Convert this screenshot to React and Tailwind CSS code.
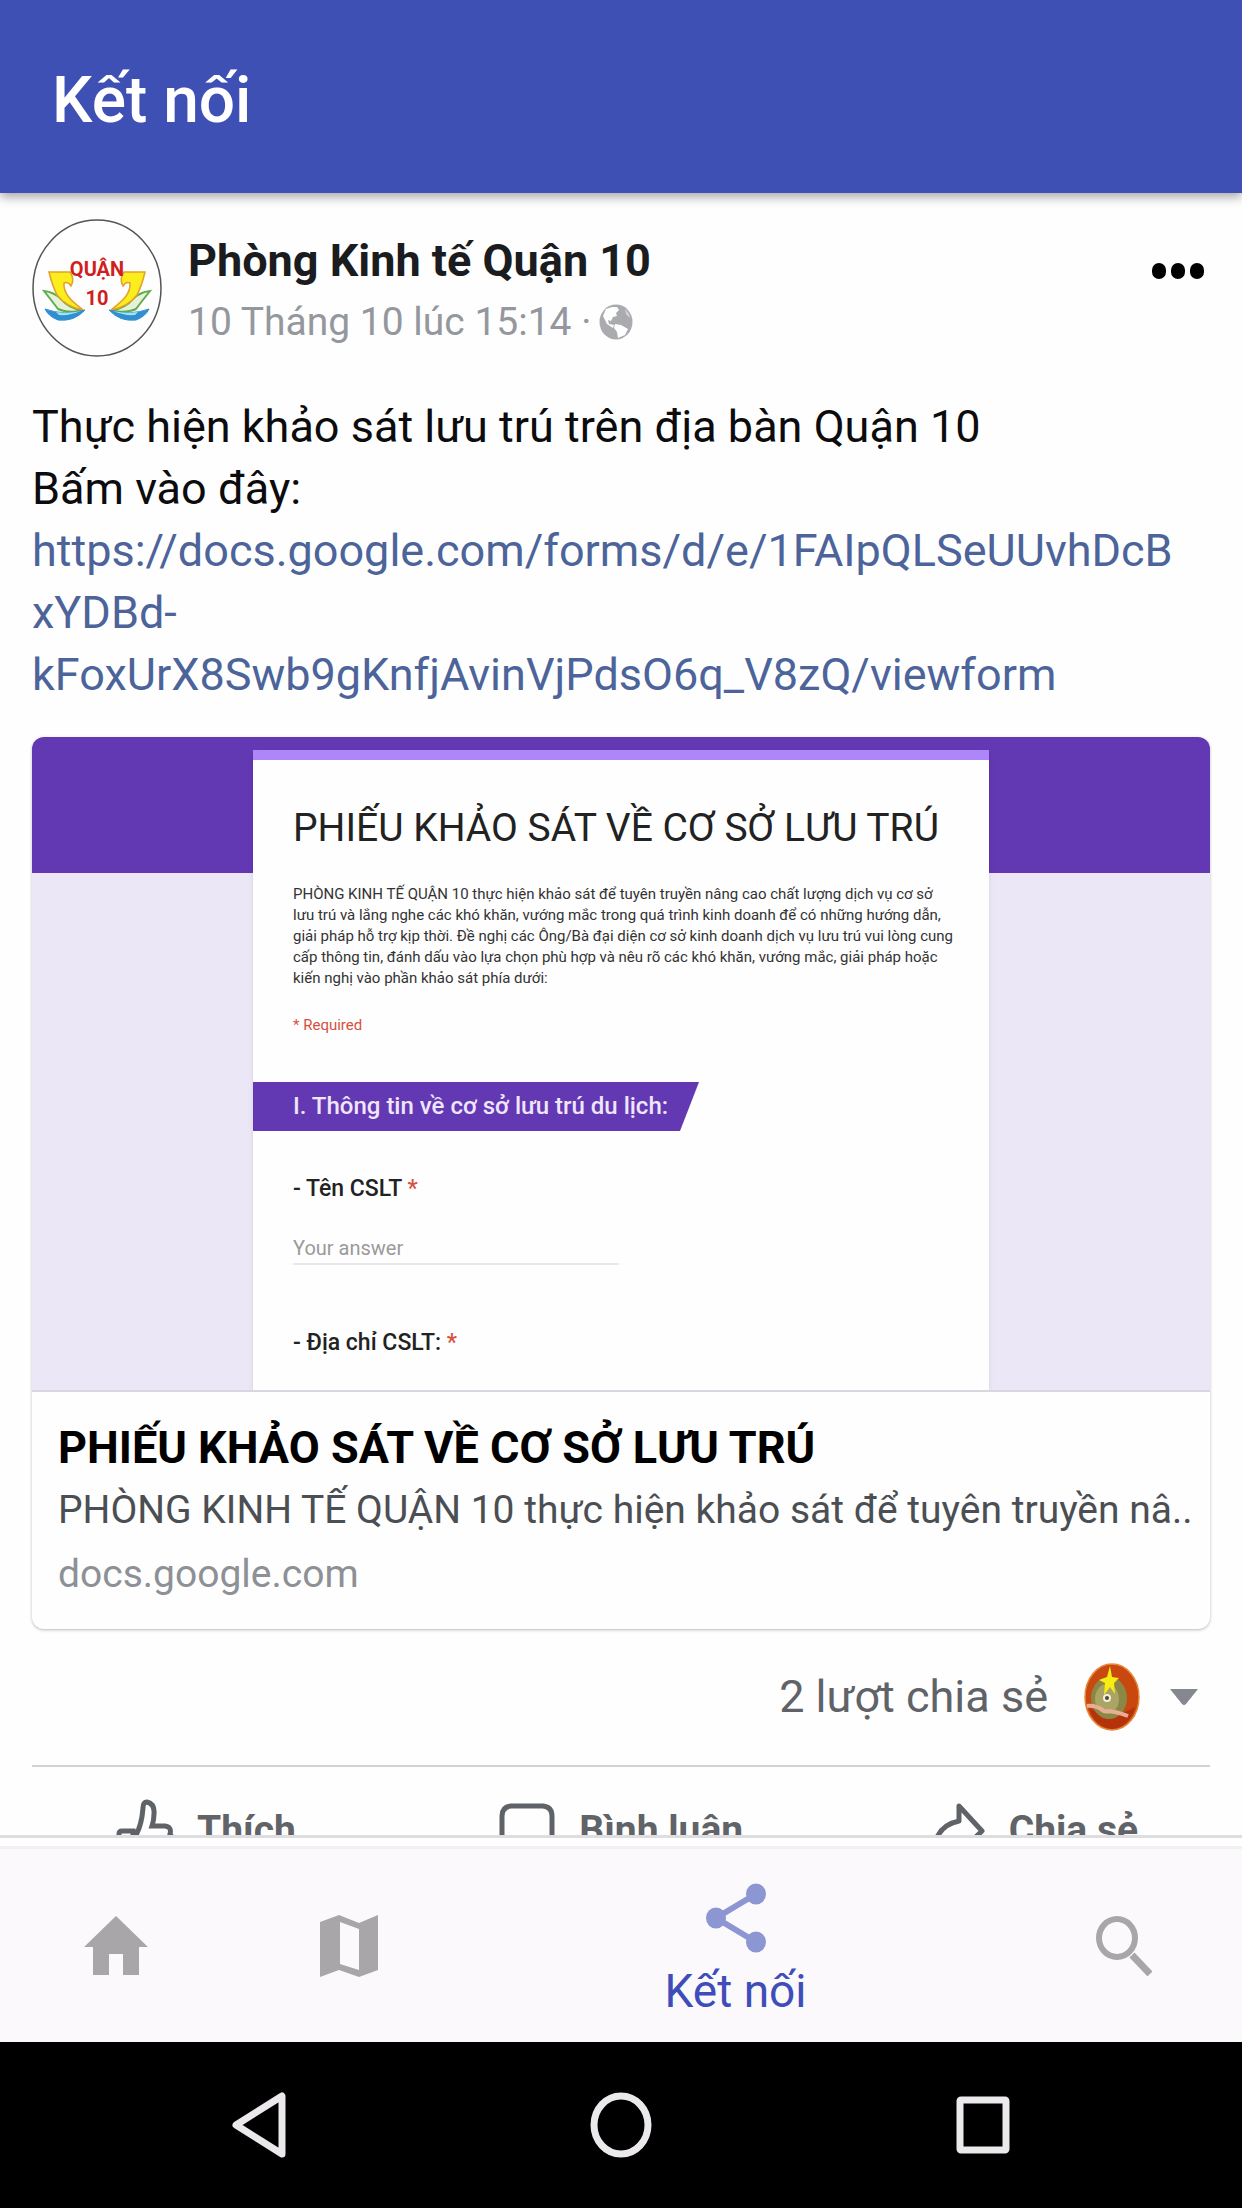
const LINK =
  "https://docs.google.com/forms/d/e/1FAIpQLSeUUvhDcBxYDBd-kFoxUrX8Swb9gKnfjAvinVjPdsO6q_V8zQ/viewform";

function PageLogo() {
  return (
    <svg viewBox="0 0 130 138" className="h-[138px] w-[130px] shrink-0" role="img" aria-label="Quận 10">
      <ellipse cx="65" cy="69" rx="64" ry="68" fill="#fefefe" stroke="#555" strokeWidth="1.5" />
      <g id="petals">
        <path d="M12 72 Q22 73 29 80 Q36 89 51 92 Q34 94 26 90 Q20 82 12 72 Z" fill="#e6f2d8" stroke="#5fae4e" strokeWidth="2" />
        <path d="M17 53 L38 53 Q43 60 39 67 Q36 62 32 64 C31 76 42 84 51 91 Q34 88 25 76 Q20 66 17 53 Z" fill="#fbee1c" stroke="#e3a02a" strokeWidth="1.5" />
        <path d="M13 90 Q32 97 53 91 Q42 103 26 101 Q16 97 13 90 Z" fill="#2f8fd0" stroke="#2f8fd0" strokeWidth="1" />
        <path d="M24 93 Q36 95 49 92 Q37 97 27 96 Z" fill="#a5e3ea" />
      </g>
      <use href="#petals" transform="translate(130 0) scale(-1 1)" />
      <text x="65" y="57" textAnchor="middle" fontSize="20" fontWeight="700" fill="#cf1f1f" className="font-['Roboto',sans-serif]">
        QUẬN
      </text>
      <text x="65" y="86" textAnchor="middle" fontSize="20" fontWeight="700" fill="#cf1f1f" className="font-['Roboto',sans-serif]">
        10
      </text>
    </svg>
  );
}

function Globe() {
  return (
    <svg viewBox="0 0 34 36" className="h-9 w-[34px]" aria-hidden="true">
      <ellipse cx="17" cy="18" rx="16.5" ry="17.5" fill="#a9abae" />
      <path d="M7 5 L13 3 L18 3 L20 6 L17 9 L18 12 L14 13 L12 17 L9 16 L10 20 L15 21 L14 24 L8 20 L4 12 Z" fill="#fff" />
      <path d="M16 20 L22 21 L29 25 L26 31 L19 34 L18 28 L15 24 Z" fill="#fff" />
      <path d="M26 5 L30 10 L31 14 L27 10 Z" fill="#d5d6d8" />
    </svg>
  );
}

function ShareEmblem() {
  return (
    <svg viewBox="0 0 56 68" className="h-[68px] w-14" role="img" aria-label="Huy hiệu">
      <ellipse cx="28" cy="34" rx="27" ry="33" fill="#c8480f" stroke="#e58a3a" strokeWidth="1.5" />
      <path d="M5 45 Q10 64 28 66 Q46 64 51 44 Q30 58 5 45 Z" fill="#b5330a" />
      <ellipse cx="25" cy="35" rx="18" ry="21" fill="#8b8845" />
      <ellipse cx="23" cy="36" rx="12" ry="15" fill="#aaa565" />
      <path d="M26 3 L28 14 L35 15 L30 20 L31 31 L26 24 L20 32 L21 20 L15 17 L23 14 Z" fill="#f9ec12" />
      <circle cx="23" cy="35" r="4" fill="#f3efe0" />
      <circle cx="23" cy="35" r="2" fill="#4c4a3a" />
      <path d="M3 43 Q12 42 20 48 Q32 48 44 53" fill="none" stroke="#e8ae95" strokeWidth="4" />
    </svg>
  );
}

function FormPreview() {
  return (
    <div className="flex h-[655px] justify-center overflow-hidden border-b-2 border-[#d9d6e0] bg-[linear-gradient(#6338b3_136px,#ebe7f6_136px)] pt-[13px]">
      <div className="w-[736px] border-t-[10px] border-[#ad86fa] bg-[#fefefe] text-[#222] shadow-md">
        <h2 className="pt-11 pl-10 text-[39px] leading-[48px] whitespace-nowrap">PHIẾU KHẢO SÁT VỀ CƠ SỞ LƯU TRÚ</h2>
        <p className="mt-8 pl-10 text-[15px] leading-[21px] whitespace-nowrap text-[#333]">
          PHÒNG KINH TẾ QUẬN 10 thực hiện khảo sát để tuyên truyền nâng cao chất lượng dịch vụ cơ sở
          <br />
          lưu trú và lắng nghe các khó khăn, vướng mắc trong quá trình kinh doanh để có những hướng dẫn,
          <br />
          giải pháp hỗ trợ kịp thời. Đề nghị các Ông/Bà đại diện cơ sở kinh doanh dịch vụ lưu trú vui lòng cung
          <br />
          cấp thông tin, đánh dấu vào lựa chọn phù hợp và nêu rõ các khó khăn, vướng mắc, giải pháp hoặc
          <br />
          kiến nghị vào phần khảo sát phía dưới:
        </p>
        <p className="mt-[26px] pl-10 text-[15px] leading-[21px] text-[#d8503f]">* Required</p>
        <h3 className="mt-[46px] w-[446px] bg-[#6338b3] pl-10 text-2xl leading-[49px] font-medium text-[#efe6fb] [clip-path:polygon(0_0,100%_0,427px_100%,0_100%)]">
          I. Thông tin về cơ sở lưu trú du lịch:
        </h3>
        <label htmlFor="ten" className="mt-[42px] block px-10 text-[23px] leading-8 font-medium">
          - Tên CSLT <span className="text-[#d8503f]">*</span>
        </label>
        <input
          id="ten"
          type="text"
          placeholder="Your answer"
          className="mt-7 ml-10 block h-8 w-[326px] border-b-2 border-[#ece6ee] text-xl placeholder:text-[#9a9a9a]"
        />
        <p className="mt-[62px] px-10 text-[23px] leading-8 font-medium">
          - Địa chỉ CSLT: <span className="text-[#d8503f]">*</span>
        </p>
      </div>
    </div>
  );
}

function ActionButton({ label, className, children }) {
  return (
    <button type="button" className={className}>
      {children}
      {label}
    </button>
  );
}

export default function App() {
  return (
    <div className="flex h-screen flex-col overflow-hidden bg-[#fefefe] font-['Roboto','Noto_Sans',sans-serif]">
      <header className="z-10 flex h-[193px] shrink-0 items-center bg-[#3f50b5] px-[52px] pt-2 text-white shadow-[0_4px_10px_rgba(0,0,0,0.35)]">
        <h1 className="text-[64px] leading-none font-medium">Kết nối</h1>
      </header>

      <main className="min-h-0 flex-1 overflow-hidden px-8 pt-[26px]">
        <div className="flex items-start">
          <PageLogo />
          <div className="ml-[26px] flex-1 pt-3">
            <p className="text-[45px] leading-[60px] font-bold text-[#1a1c20]">Phòng Kinh tế Quận 10</p>
            <p className="flex items-center gap-2 text-[39px] leading-[62px] text-[#94979d]">
              10 Tháng 10 lúc 15:14 · <Globe />
            </p>
          </div>
          <button type="button" aria-label="Thêm" className="mt-11 mr-[6px] flex gap-[5px]">
            <span className="h-4 w-[14px] rounded-full bg-black" />
            <span className="h-4 w-[14px] rounded-full bg-black" />
            <span className="h-4 w-[14px] rounded-full bg-black" />
          </button>
        </div>

        <p className="mt-[39px] text-[45px] leading-[62px] break-all text-[#0c0c0e]">
          Thực hiện khảo sát lưu trú trên địa bàn Quận 10
          <br />
          Bấm vào đây:
          <br />
          <a href={LINK} className="text-[#4c649a]">
            https://docs.google.com/forms/d/e/1FAIpQLSeUUvhDcB
            <br />
            xYDBd-
            <br />
            kFoxUrX8Swb9gKnfjAvinVjPdsO6q_V8zQ/viewform
          </a>
        </p>

        {/* link card */}
        <article className="mt-[31px] overflow-hidden rounded-xl shadow-[0_1px_3px_rgba(60,50,80,0.35)]">
          <FormPreview />
          <div className="px-[26px] pt-[25px] pb-[22px]">
            <h2 className="text-[45px] leading-[62px] font-bold text-black">PHIẾU KHẢO SÁT VỀ CƠ SỞ LƯU TRÚ</h2>
            <p className="text-[39px] leading-[62px] whitespace-nowrap text-[#4b4e53]">
              PHÒNG KINH TẾ QUẬN 10 thực hiện khảo sát để tuyên truyền nâ..
            </p>
            <p className="text-[39px] leading-[66px] text-[#8d9095]">docs.google.com</p>
          </div>
        </article>

        <div className="flex h-[138px] items-center justify-end border-b-2 border-[#d3d1d8] pr-3">
          <span className="mr-9 text-[45px] text-[#5f6368]">2 lượt chia sẻ</span>
          <ShareEmblem />
          <button type="button" aria-label="Chọn người" className="ml-[30px]">
            <svg viewBox="0 0 28 16" className="h-4 w-7" fill="#85888e">
              <path d="M0 0H28L16 15Q14 17 12 15Z" />
            </svg>
          </button>
        </div>

        <div className="flex justify-between pt-7 pr-[72px] pl-[83px] text-[39px] leading-[70px] font-bold text-[#606368]">
          <ActionButton label="Thích" className="flex items-center gap-[22px]">
            <svg viewBox="0 0 60 64" className="h-16 w-[60px]" fill="none" stroke="#5f6368" strokeWidth="5">
              <path d="M4 60V36Q4 33 7 33H18V60M18 42C23 35 27 24 28 10Q28 4 32 4Q40 6 39 16Q39 22 37 28H50Q57 29 55 36Q59 41 56 46Q54 56 46 60H18" />
            </svg>
          </ActionButton>
          <ActionButton label="Bình luận" className="ml-4 flex items-center gap-6">
            <svg viewBox="0 0 56 56" className="h-14 w-14" fill="none" stroke="#5f6368" strokeWidth="5">
              <path d="M12 4H44Q53 5 53 14V36Q53 44 44 45H30L16 54V45H12Q3 44 3 36V14Q3 5 12 4Z" />
            </svg>
          </ActionButton>
          <ActionButton label="Chia sẻ" className="flex items-center gap-6">
            <svg viewBox="0 0 54 56" className="h-14 w-[54px]" fill="none" stroke="#5f6368" strokeWidth="5" strokeLinejoin="round">
              <path d="M28 4L51 29L28 51V39Q12 39 3 50Q4 24 28 19Z" />
            </svg>
          </ActionButton>
        </div>
      </main>

      <nav className="z-10 h-[207px] shrink-0 border-t-[3px] border-[#dedde1] bg-white pt-2">
        <div className="grid h-full grid-cols-[232px_233px_1fr_236px] items-center border-t-[3px] border-[#f1f0f2] bg-[#fbf9fc] text-[#a8a6a9]">
          <a href="#home" aria-label="Trang chủ" className="flex justify-center">
            <svg viewBox="0 0 64 60" className="h-[60px] w-16" fill="currentColor">
              <path d="M32 0L64 31H55V59H39V38H25V59H9V31H0Z" />
            </svg>
          </a>
          <a href="#map" aria-label="Bản đồ" className="flex justify-center">
            <svg viewBox="0 0 58 62" className="h-[62px] w-[58px]" fill="currentColor">
              <path fillRule="evenodd" d="M0 7L19 0L39 8L58 0V55L39 62L19 55L0 62ZM20 7V49L39 55V14Z" />
            </svg>
          </a>
          <a href="#connect" className="flex flex-col items-center gap-[6px] pt-[14px] text-[#3f4db8]">
            <svg viewBox="0 0 60 70" className="h-[70px] w-[60px]" fill="#8b96d3">
              <path d="M50 11L10 35L50 59" fill="none" stroke="#8b96d3" strokeWidth="6" />
              <ellipse cx="50" cy="11" rx="10" ry="10.5" />
              <ellipse cx="10" cy="35" rx="10" ry="10.5" />
              <ellipse cx="50" cy="59" rx="10" ry="10.5" />
            </svg>
            <span className="text-[46px] leading-[64px]">Kết nối</span>
          </a>
          <a href="#search" aria-label="Tìm kiếm" className="flex justify-center">
            <svg viewBox="0 0 56 60" className="h-[60px] w-14" fill="none" stroke="currentColor">
              <ellipse cx="21" cy="22" rx="18" ry="19" strokeWidth="6" />
              <path d="M36 39L54 58" strokeWidth="7" />
            </svg>
          </a>
        </div>
      </nav>

      <footer className="flex h-[166px] shrink-0 items-center justify-center gap-[304px] bg-black">
        <button type="button" aria-label="Quay lại">
          <svg viewBox="0 0 54 66" className="h-[66px] w-[54px]" fill="none" stroke="#ebe9ec" strokeWidth="7" strokeLinejoin="round">
            <path d="M50 4V62L4 33Z" />
          </svg>
        </button>
        <button type="button" aria-label="Màn hình chính">
          <svg viewBox="0 0 62 66" className="h-[66px] w-[62px]" fill="none" stroke="#ebe9ec" strokeWidth="7">
            <ellipse cx="31" cy="33" rx="27" ry="29" />
          </svg>
        </button>
        <button type="button" aria-label="Gần đây">
          <svg viewBox="0 0 54 58" className="h-[58px] w-[54px]" fill="none" stroke="#ebe9ec" strokeWidth="7">
            <rect x="4" y="4" width="46" height="50" rx="1" />
          </svg>
        </button>
      </footer>
    </div>
  );
}
